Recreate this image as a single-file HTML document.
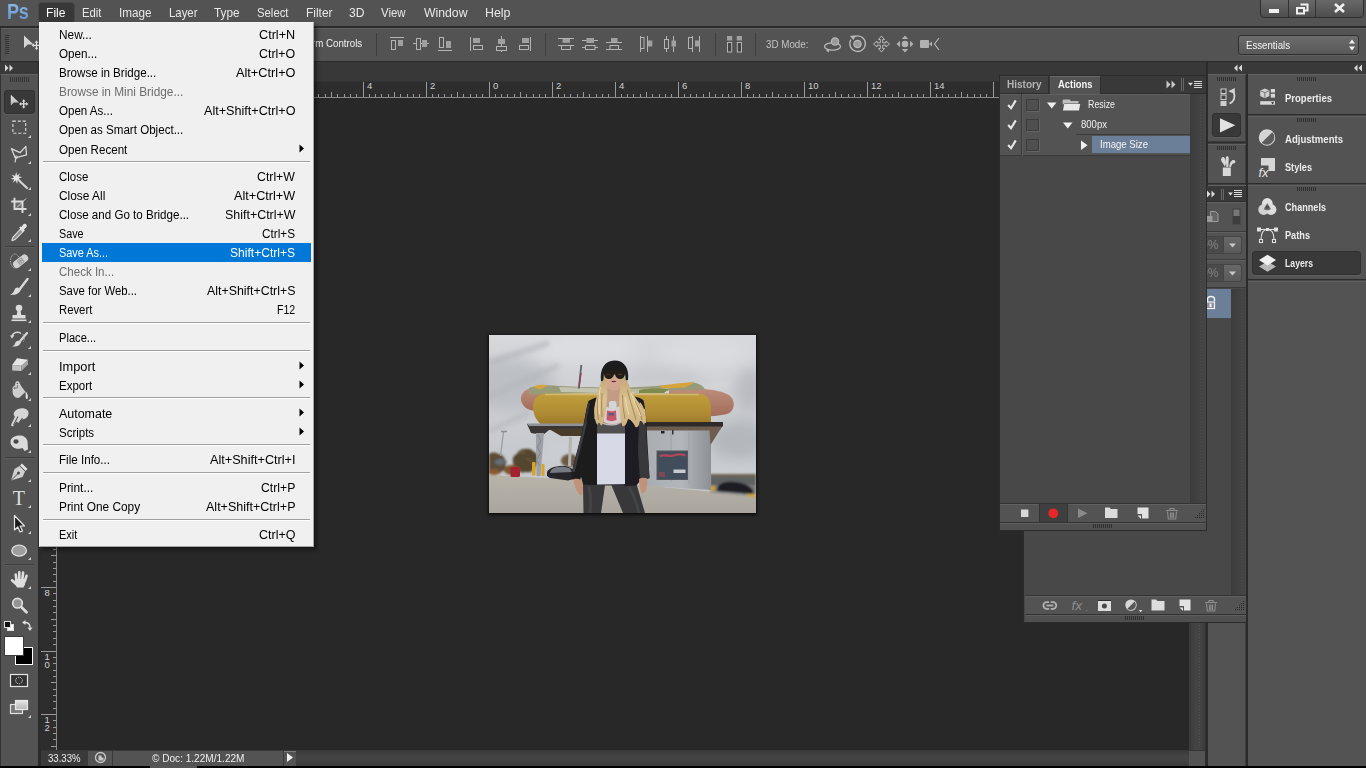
<!DOCTYPE html>
<html><head><meta charset="utf-8"><title>Photoshop</title>
<style>
html,body{margin:0;padding:0;background:#535353;overflow:hidden}
body{width:1366px;height:768px;font-family:"Liberation Sans",sans-serif}
#app{position:relative;width:1366px;height:768px;overflow:hidden;background:#535353}
#app div,#app span,#app svg{position:absolute;box-sizing:border-box}
.t{white-space:pre;line-height:normal;transform-origin:0 50%}
.grip{background:repeating-linear-gradient(90deg,#2f2f2f 0,#2f2f2f 1px,transparent 1px,transparent 2px)}
</style></head><body><div id="app">
<!-- ===== menu bar ===== -->
<div style="left:0;top:0;width:1366px;height:26px;background:#535353"></div>
<span class="t" style="left:7.2px;top:-1px;font-size:22.4px;font-weight:700;letter-spacing:-0.3px;transform:scaleX(.81);background:linear-gradient(#8cb6e2 15%,#5f97d3 85%);-webkit-background-clip:text;background-clip:text;color:transparent">Ps</span>
<div style="left:39px;top:3px;width:35px;height:19px;background:#383838;border-radius:3px;box-shadow:0 0 0 1px #484848"></div>
<span class="t" style="left:45.5px;top:5.2px;font-size:13px;color:#fff;font-weight:400;transform:scaleX(0.9306);">File</span>
<span class="t" style="left:81.5px;top:5.2px;font-size:13px;color:#e8e8e8;font-weight:400;transform:scaleX(0.8703);">Edit</span>
<span class="t" style="left:118.5px;top:5.2px;font-size:13px;color:#e8e8e8;font-weight:400;transform:scaleX(0.8993);">Image</span>
<span class="t" style="left:168.5px;top:5.2px;font-size:13px;color:#e8e8e8;font-weight:400;transform:scaleX(0.8761);">Layer</span>
<span class="t" style="left:213.5px;top:5.2px;font-size:13px;color:#e8e8e8;font-weight:400;transform:scaleX(0.9047);">Type</span>
<span class="t" style="left:256.5px;top:5.2px;font-size:13px;color:#e8e8e8;font-weight:400;transform:scaleX(0.8716);">Select</span>
<span class="t" style="left:305.5px;top:5.2px;font-size:13px;color:#e8e8e8;font-weight:400;transform:scaleX(0.9173);">Filter</span>
<span class="t" style="left:348.5px;top:5.2px;font-size:13px;color:#e8e8e8;font-weight:400;transform:scaleX(0.9323);">3D</span>
<span class="t" style="left:380.5px;top:5.2px;font-size:13px;color:#e8e8e8;font-weight:400;transform:scaleX(0.8765);">View</span>
<span class="t" style="left:423.5px;top:5.2px;font-size:13px;color:#e8e8e8;font-weight:400;transform:scaleX(0.9405);">Window</span>
<span class="t" style="left:484.5px;top:5.2px;font-size:13px;color:#e8e8e8;font-weight:400;transform:scaleX(0.9533);">Help</span>
<!-- window controls -->
<div style="left:1260px;top:-3px;width:104px;height:21px;border:1px solid #2e2e2e;border-radius:0 0 4px 4px;background:linear-gradient(#6b6b6b,#4e4e4e)"></div>
<div style="left:1288px;top:0;width:1px;height:17px;background:#333"></div>
<div style="left:1315px;top:0;width:1px;height:17px;background:#333"></div>
<div style="left:1269px;top:9px;width:10px;height:4px;background:#f0f0f0"></div>
<svg style="left:1295px;top:3px" width="14" height="12" viewBox="0 0 14 12"><path d="M5.5 1.5h7v6h-2.500" fill="none" stroke="#f0f0f0" stroke-width="2"/><rect x="2" y="5" width="7" height="5.500" fill="none" stroke="#f0f0f0" stroke-width="2"/></svg>
<svg style="left:1333px;top:3px" width="13" height="10" viewBox="0 0 13 10"><path d="M2 1l9 8M11 1l-9 8" stroke="#f0f0f0" stroke-width="2.600" fill="none"/></svg>

<!-- ===== options bar ===== -->
<div style="left:0;top:26px;width:1366px;height:2px;background:#2b2b2b"></div>
<div style="left:0;top:28px;width:1366px;height:33px;background:#535353;border-top:1px solid #626262"></div>
<div style="left:0;top:61px;width:1366px;height:1px;background:#2b2b2b"></div>
<div style="left:0;top:28px;width:1px;height:33px;background:#333"></div>
<!-- dark band under options -->
<div style="left:0;top:62px;width:1366px;height:12px;background:#393939"></div>
<!-- doc tab band -->
<div style="left:40px;top:62px;width:1167px;height:19px;background:#383838"></div>
<!-- rulers & canvas -->
<div style="left:41px;top:81px;width:1165px;height:17px;background:#2d2d2d;border-bottom:1px solid #8a8a8a;border-top:1px solid #333"></div>
<div style="left:41px;top:98px;width:16px;height:652px;background:#2d2d2d;border-right:1px solid #8a8a8a"></div>
<div style="left:57px;top:98px;width:1133px;height:652px;background:#282828"></div>
<!-- doc v scrollbar -->
<div style="left:1189px;top:98px;width:16px;height:652px;background:linear-gradient(90deg,#393939,#444 40%,#444 70%,#3c3c3c)"></div>
<div style="left:1199px;top:100px;width:1px;height:648px;background:repeating-linear-gradient(180deg,#565656 0,#565656 1px,transparent 1px,transparent 3px)"></div>
<!-- status bar -->
<div style="left:41px;top:750px;width:1165px;height:16px;background:linear-gradient(#3a3a3a,#444 45%,#444 60%,#3b3b3b)"></div>
<div style="left:41px;top:750px;width:47px;height:16px;background:#3a3a3a"></div>
<div style="left:88px;top:750px;width:208px;height:16px;background:#535353"></div>
<div style="left:112px;top:750px;width:1px;height:16px;background:#3a3a3a"></div>
<div style="left:283px;top:750px;width:1px;height:16px;background:#3a3a3a"></div>
<div style="left:1189px;top:750px;width:16px;height:16px;background:#535353"></div>
<span class="t" style="left:47.5px;top:753.0px;font-size:10px;color:#f0f0f0;font-weight:400;transform:scaleX(0.9581);">33.33%</span>
<span class="t" style="left:151.5px;top:753.0px;font-size:10px;color:#f0f0f0;font-weight:400;transform:scaleX(1.0070);">© Doc: 1.22M/1.22M</span>
<svg style="left:286px;top:752px" width="8" height="11" viewBox="0 0 8 11"><path d="M1 1l6 4.500-6 4.500z" fill="#f0f0f0"/></svg>
<svg style="left:94px;top:751px" width="13" height="13" viewBox="0 0 13 13"><circle cx="6.500" cy="6.500" r="5" fill="none" stroke="#c8c8c8" stroke-width="1.300"/><path d="M4.500 4.500h3v2h2v3h-5z" fill="#c8c8c8"/></svg>
<div style="left:41px;top:750px;width:1165px;height:1px;background:#363636"></div>
<div style="left:284px;top:751px;width:12px;height:1px;background:#7a7a7a"></div>
<!-- bottom black -->
<div style="left:0;top:766px;width:1366px;height:2px;background:#000"></div>
<div style="left:150px;top:766px;width:47px;height:2px;background:#555"></div>
<!-- ===== tools panel ===== -->
<div style="left:0;top:62px;width:40px;height:12px;background:#393939"></div>
<svg style="left:4px;top:64px" width="10" height="8" viewBox="0 0 10 8"><path d="M1 .5l3.500 3.500L1 7.500zM5.500.5L9 4 5.500 7.500z" fill="#d8d8d8"/></svg>
<div style="left:0;top:74px;width:38px;height:692px;background:#535353;border-top:1px solid #626262;border-left:1px solid #333"></div>
<div style="left:38px;top:62px;width:3px;height:704px;background:#2b2b2b"></div>
<div style="left:10px;top:77px;width:20px;height:5px;background:repeating-linear-gradient(90deg,#333 0,#333 1px,transparent 1px,transparent 2px)"></div>
<!-- selected move tool -->
<div style="left:4px;top:90px;width:31px;height:24px;background:#393939;border-radius:3px;border:1px solid #303030;box-shadow:0 1px 0 #5e5e5e"></div>
<!-- separators -->
<div style="left:5px;top:246px;width:29px;height:1px;background:#3c3c3c;box-shadow:0 1px 0 #5c5c5c"></div>
<div style="left:5px;top:457px;width:29px;height:1px;background:#3c3c3c;box-shadow:0 1px 0 #5c5c5c"></div>
<div style="left:5px;top:564px;width:29px;height:1px;background:#3c3c3c;box-shadow:0 1px 0 #5c5c5c"></div>
<svg style="left:0;top:0;pointer-events:none" width="40" height="768" viewBox="0 0 40 768">
<defs>
<linearGradient id="ig" x1="0" y1="0" x2="0" y2="1"><stop offset="0" stop-color="#e6e6e6"/><stop offset="1" stop-color="#b4b4b4"/></linearGradient>
</defs>
<g fill="#cfcfcf">
<!-- corner triangles -->
<path d="M28 138L31 135V138z"/><path d="M28 164L31 161V164z"/><path d="M28 190L31 187V190z"/><path d="M28 216L31 213V216z"/><path d="M28 242L31 239V242z"/>
<path d="M28 271L31 268V271z"/><path d="M28 297L31 294V297z"/><path d="M28 323L31 320V323z"/><path d="M28 349L31 346V349z"/><path d="M28 375L31 372V375z"/><path d="M28 401L31 398V401z"/><path d="M28 427L31 424V427z"/><path d="M28 453L31 450V453z"/>
<path d="M28 482L31 479V482z"/><path d="M28 508L31 505V508z"/><path d="M28 534L31 531V534z"/><path d="M28 560L31 557V560z"/>
<path d="M28 589L31 586V589z"/><path d="M28 718L31 715V718z"/>
</g>
<!-- move -->
<g transform="translate(6,89)">
<path d="M4.800 5.700V16.600l3-3.100h5.200z" fill="url(#ig)"/>
<path d="M17.700 10.300l1.800 2.100h-1.200v1.900h1.900v-1.200l2.100 1.800-2.100 1.800v-1.200h-1.900v1.900h1.200l-1.800 2.100-1.800-2.100h1.200v-1.900h-1.900v1.200l-2.100-1.800 2.100-1.800v1.200h1.900v-1.900h-1.200z" fill="#e4e4e4"/>
</g>
<!-- marquee -->
<g transform="translate(6,115)"><rect x="6.900" y="6.100" width="12.800" height="12.200" fill="none" stroke="#dcdcdc" stroke-width="1.100" stroke-dasharray="3 1.900"/></g>
<!-- poly lasso -->
<g transform="translate(6,141)"><path d="M5.400 7.600l8.600 4.100 5.800-6.300.7 8.400-11.300 3z" fill="none" stroke="#d8d8d8" stroke-width="1.300" stroke-linejoin="round"/><circle cx="10.300" cy="16.200" r="1.300" fill="none" stroke="#d8d8d8" stroke-width="1"/><path d="M9.800 17.500l-.8 3.800" stroke="#d8d8d8" stroke-width="1.200"/></g>
<!-- magic wand -->
<g transform="translate(6,167)"><path d="M13.500 14L21 21" stroke="#d4d4d4" stroke-width="2.200" stroke-linecap="round"/><path d="M10.200 5l.9 3.600 2.900-2.400-1.500 3.300 3.800.5-3.500 1.500 2.200 3-3.400-1.300-.4 3.800-1.500-3.500-3 2.300 1.600-3.400-3.800-.3 3.500-1.600-2.400-2.900 3.500 1.300z" fill="#e4e4e4"/></g>
<!-- crop -->
<g transform="translate(6,193)" fill="none" stroke="#dcdcdc" stroke-width="1.900"><rect x="9.500" y="9" width="7" height="7" fill="#6a6a6a" stroke="none"/><path d="M8.500 4.800v11.200H20.500"/><path d="M5.200 8.500h11.300V20"/><path d="M20 5.500l-9 9" stroke-width="1"/></g>
<!-- eyedropper -->
<g transform="translate(6,219)"><path d="M17.300 5.200c1.800-1.800 4.800 1.200 3 3l-2.300 2.300.9.900-1.600 1.600-4.200-4.200 1.600-1.600.9.900z" fill="#e4e4e4"/><path d="M14.300 10.200l2.600 2.600-7.800 7.800-2.800 1.100-.5-.5 1.100-2.800z" fill="#8e8e8e" stroke="#dedede" stroke-width="1.100"/></g>
<!-- healing brush -->
<g transform="translate(6,248)"><ellipse cx="9" cy="13" rx="4.500" ry="7" fill="none" stroke="#c8c8c8" stroke-width="1" stroke-dasharray="1.200 1.200"/><g transform="rotate(-38 14.500 13)"><rect x="6" y="9.500" width="17" height="7.500" rx="3.500" fill="#d2d2d2"/><rect x="11.500" y="10.500" width="6" height="5.500" fill="#9a9a9a"/><circle cx="13.200" cy="12" r=".6" fill="#e8e8e8"/><circle cx="15.700" cy="12" r=".6" fill="#e8e8e8"/><circle cx="13.200" cy="14.500" r=".6" fill="#e8e8e8"/><circle cx="15.700" cy="14.500" r=".6" fill="#e8e8e8"/></g></g>
<!-- brush -->
<g transform="translate(6,274)"><path d="M21.500 5l-8 10.500" stroke="#d8d8d8" stroke-width="2.400" stroke-linecap="round"/><path d="M12 13.500l2.500 2c-.5 4-5 6-10.500 5 3-1 3.500-2.200 4.200-4 .7-2 2-3.200 3.800-3z" fill="#dcdcdc"/></g>
<!-- stamp -->
<g transform="translate(6,300)" fill="#dcdcdc"><circle cx="13" cy="8" r="3.300"/><path d="M11.500 10.500h3l.8 4.500h4.200v3.500h-13V15h4.200z"/><rect x="5.500" y="19.500" width="15" height="1.600"/></g>
<!-- history brush -->
<g transform="translate(6,326)"><path d="M21 7l-8 9.500" stroke="#d8d8d8" stroke-width="2.200" stroke-linecap="round"/><path d="M13.500 15l1.300 1.300c-.5 3-4 4.800-8.800 4.200 2.300-.8 2.700-2 3.200-3.400.6-1.700 2.600-2.600 4.300-2.100z" fill="#d8d8d8"/><path d="M6 10c1-3.500 6-5 9-2.500" fill="none" stroke="#d8d8d8" stroke-width="1.500"/><path d="M4 9.500l4.500-.5-2.500 3.800z" fill="#d8d8d8"/><path d="M16.500 8c2 1.500 2.500 5 1 7.500" fill="none" stroke="#c8c8c8" stroke-width="1" stroke-dasharray="1.200 1.200"/></g>
<!-- eraser -->
<g transform="translate(6,352)"><path d="M11 6.200l11 1.500-6.500 6-9.300-.6z" fill="#e6e6e6"/><path d="M6.200 13.100l9.300.6v5.400l-9.300-.7z" fill="#c4c4c4"/><path d="M15.500 13.700l6.500-6v4.500l-6.500 6.900z" fill="#a6a6a6"/></g>
<!-- paint bucket -->
<g transform="translate(6,378)"><path d="M7 11l7-4.500 5.500 7.500-6 5.500c-1.500 1-4 .5-5.500-1.500s-2-5-1-7z" fill="#cdcdcd"/><ellipse cx="10.500" cy="9" rx="4.200" ry="2" transform="rotate(-33 10.500 9)" fill="#8a8a8a" stroke="#e0e0e0" stroke-width=".8"/><path d="M10 9.500V5c0-1.500 3-1.500 3 0v4" fill="none" stroke="#e6e6e6" stroke-width="1.200"/><path d="M19.500 13.500c1.500 1 2.500 3.500 2.300 6.500-.1 1.300-1.800 1.300-2 0-.3-2 .2-4-.3-6.500z" fill="#e6e6e6"/></g>
<!-- smudge -->
<g transform="translate(6,404)"><path d="M8 8.500c2-3.500 7-4.800 11-3.800 2.500.6 3.800 2.600 3.500 5.200-.4 3-2.600 4.800-5.400 5.300l-2.300.4-2.300 3.400-2.200-1.400-2.800 4.100c-.9 1.200-2.900.2-2.300-1.300l3.700-7.600c-1.200-1.100-1.600-2.800-.9-4.300z" fill="#d6d6d6"/><path d="M12 12.500l-4.500 8.500M16.500 14l-3.500 5" stroke="#5a5a5a" stroke-width="1.100"/></g>
<!-- dodge -->
<g transform="translate(6,430)"><path d="M4.500 12c0-4 4-6.500 9-6.500 4 0 7 2 8 5.500l.5 8.500-3.500 1.500-2-3c-1 .5-2.500.8-4 .8-4.500 0-8-3-8-6.800z" fill="#dadada"/><ellipse cx="10" cy="11.500" rx="2.600" ry="2.200" fill="#4a4a4a"/></g>
<!-- pen -->
<g transform="translate(6,459)"><path d="M16 4.500l5.500 5.500-2 2-5.500-5.500z" fill="#e4e4e4"/><path d="M13.500 7l5.500 5.500-2.500 5.500L5 21.500 8.500 10z" fill="#d0d0d0"/><path d="M5 21.500l7-7" stroke="#4a4a4a" stroke-width="1"/><circle cx="12.500" cy="14" r="1.500" fill="#4a4a4a"/><path d="M14.600 7.500l4 4" stroke="#5a5a5a" stroke-width=".9"/></g>
<!-- path selection arrow -->
<g transform="translate(6,511)"><path d="M8.500 4.500v14.500l3.300-3 2.300 5 2.400-1.100-2.300-4.900h4.300z" fill="#1c1c1c" stroke="#e8e8e8" stroke-width="1.200" stroke-linejoin="round"/></g>
<!-- ellipse -->
<g transform="translate(6,537)"><ellipse cx="13.100" cy="13.700" rx="7.300" ry="5.500" fill="#9e9e9e" stroke="#e0e0e0" stroke-width="1.300"/></g>
<!-- hand -->
<g transform="translate(6,566)"><g stroke="#dedede" stroke-width="2.600" stroke-linecap="round" fill="none"><path d="M10.600 14.500L9.700 8.500"/><path d="M13.300 13.500V6.300"/><path d="M16.300 13.500l.8-7"/><path d="M18.800 15l1.700-5.200"/><path d="M9.500 17.500L6 14.300"/></g><path d="M9 13h10.800l-.8 5.500-1.500 3H11l-2.500-4z" fill="#dedede"/></g>
<!-- zoom -->
<g transform="translate(6,592)"><circle cx="11.500" cy="11.200" r="4.800" fill="#949494" stroke="#dedede" stroke-width="1.700"/><path d="M15.500 15.300l5 5" stroke="#dedede" stroke-width="2.800" stroke-linecap="round"/></g>
<!-- default colors / swap -->
<rect x="7.500" y="624.500" width="6" height="6" fill="#fff" stroke="#e0e0e0" stroke-width="1"/><rect x="4.500" y="621.500" width="6" height="6" fill="#111" stroke="#e0e0e0" stroke-width="1"/>
<path d="M25 622.500c3 0 5 1.500 5 5" fill="none" stroke="#e0e0e0" stroke-width="1.400"/><path d="M22 622.500l3.500-2.500v5zM30 631l-2.500-3.500h5z" fill="#e0e0e0"/>
<!-- bg / fg -->
<rect x="15.500" y="647.500" width="17" height="17" fill="#000" stroke="#fff" stroke-width="1"/>
<rect x="4.500" y="636.500" width="19" height="19" fill="#fff" stroke="#3a3a3a" stroke-width="1"/>
<!-- quick mask -->
<rect x="10.500" y="674.500" width="17" height="12" fill="#333" stroke="#e6e6e6" stroke-width="1.200"/><circle cx="19" cy="680.500" r="3.300" fill="none" stroke="#f0f0f0" stroke-width="1" stroke-dasharray="1 1"/>
<!-- screen mode -->
<rect x="10.500" y="704.500" width="12" height="9" fill="#777" stroke="#e0e0e0" stroke-width="1.200"/><rect x="15.500" y="700.500" width="12" height="9" fill="url(#ig)" stroke="#e8e8e8" stroke-width="1.200"/>
</svg>
<span class="t" style="left:12.8px;top:484.5px;font-family:'Liberation Serif',serif;font-size:20px;color:#dcdcdc;line-height:26px">T</span>
<!-- ===== options bar content ===== -->
<div style="left:5px;top:35px;width:4px;height:20px;background:repeating-linear-gradient(180deg,#333 0,#333 1px,transparent 1px,transparent 2px)"></div>
<svg style="left:20px;top:32px" width="22" height="22" viewBox="0 0 22 22"><path d="M4 3.500V16l3.800-3.400H13.500z" fill="#d6d6d6"/><path d="M16.500 8.500l2 2.300h-1.400v1.900H19v-1.400l2.300 2-2.300 2v-1.400h-1.900v1.900h1.400l-2 2.300-2-2.300h1.400v-1.900H14v1.400l-2.300-2 2.300-2v1.400h1.900v-1.900h-1.400z" fill="#e0e0e0"/></svg>
<span class="t" style="left:311.8px;top:37.3px;font-size:10.5px;color:#f0f0f0;font-weight:400;transform:scaleX(0.9251);">rm Controls</span>
<div style="left:376px;top:33px;width:1px;height:23px;background:#3e3e3e"></div>
<div style="left:545px;top:33px;width:1px;height:23px;background:#3e3e3e"></div>
<div style="left:715px;top:33px;width:1px;height:23px;background:#3e3e3e"></div>
<div style="left:755px;top:33px;width:1px;height:23px;background:#3e3e3e"></div>
<svg style="left:0;top:28px" width="1000" height="33" viewBox="0 28 1000 33" fill="none" stroke="#b4b4b4" stroke-width="1"><path d="M390 37.5L404 37.5"/><rect x="391.5" y="40.5" width="4" height="9"/><rect x="398" y="40" width="5" height="6" fill="#a0a0a0" stroke="none"/><path d="M413 43.5L429 43.5"/><rect x="416.5" y="38.5" width="4" height="11" fill="#535353"/><rect x="422" y="40" width="5" height="7" fill="#a0a0a0" stroke="none"/><path d="M438 50.5L452 50.5"/><rect x="439.5" y="37.5" width="4" height="10"/><rect x="446" y="41" width="5" height="7" fill="#a0a0a0" stroke="none"/><path d="M470.5 37L470.5 51"/><rect x="473" y="38" width="7" height="5" fill="#a0a0a0" stroke="none"/><rect x="473.5" y="45.5" width="9" height="4"/><path d="M501.5 36L501.5 52"/><rect x="498" y="39" width="7" height="5" fill="#a0a0a0" stroke="none"/><rect x="496.5" y="46.5" width="10" height="4" fill="#535353"/><path d="M530.5 37L530.5 51"/><rect x="522" y="38" width="7" height="5" fill="#a0a0a0" stroke="none"/><rect x="519.5" y="45.5" width="9" height="4"/><path d="M558 38.5L574 38.5"/><rect x="562.5" y="39" width="7.5" height="3.8" fill="#a0a0a0" stroke="none"/><path d="M558 45.5L574 45.5"/><rect x="561.5" y="45.5" width="9" height="4"/><path d="M582 40.5L598 40.5"/><rect x="586.5" y="38" width="7.5" height="5" fill="#a0a0a0" stroke="none"/><path d="M582 47.5L598 47.5"/><rect x="585.5" y="45.5" width="9.5" height="4" fill="#535353"/><path d="M606 42.5L622 42.5"/><rect x="611" y="38" width="6.5" height="4.2" fill="#a0a0a0" stroke="none"/><path d="M606 49.5L622 49.5"/><rect x="610" y="45.5" width="8.5" height="4"/><path d="M640.5 36L640.5 52"/><rect x="640.5" y="37.5" width="3.5" height="11"/><path d="M647.5 36L647.5 52"/><rect x="648" y="40.5" width="4.3" height="6" fill="#a0a0a0" stroke="none"/><path d="M666.5 36L666.5 52"/><rect x="664.5" y="39.5" width="4" height="9" fill="#535353"/><path d="M673.5 36L673.5 52"/><rect x="671.5" y="40.5" width="4.5" height="6" fill="#a0a0a0" stroke="none"/><path d="M692.5 36L692.5 52"/><rect x="688.5" y="37.5" width="4" height="11"/><path d="M699.5 36L699.5 52"/><rect x="695" y="40.5" width="4.5" height="6" fill="#a0a0a0" stroke="none"/><rect x="727" y="36" width="5.2" height="4.5" fill="#a0a0a0" stroke="none"/><rect x="736.8" y="36" width="5.2" height="4.5" fill="#a0a0a0" stroke="none"/><rect x="727.5" y="42.5" width="4.2" height="9.5" fill="#444"/><rect x="737.3" y="42.5" width="4.2" height="9.5" fill="#444"/></svg>
<span class="t" style="left:765.5px;top:37.5px;font-size:10.5px;color:#c2c2c2;font-weight:400;transform:scaleX(0.9334);">3D Mode:</span>
<svg style="left:820px;top:32px" width="124" height="24" viewBox="820 32 124 24">
<g fill="none" stroke="#b9b9b9" stroke-width="1.300">
<ellipse cx="832.500" cy="46.500" rx="8" ry="3.600"/><circle cx="835" cy="41.500" r="3.600" fill="#999"/><path d="M826 50.500l3.500-1-1 3z" fill="#b9b9b9" stroke="none"/>
<path d="M851 39.500a7.800 7.800 0 1 0 4-3.200"/><path d="M850 36l5.800-.8-2.200 4.800z" fill="#b9b9b9" stroke="none"/><circle cx="857.500" cy="44" r="3.600" fill="#999"/>
<path d="M881.500 36l3 3.500h-1.800v3.300h3.300V41l3.500 3-3.500 3v-1.800h-3.300v3.300h1.800l-3 3.500-3-3.500h1.800v-3.300H877V47l-3.500-3 3.500-3v1.800h3.300v-3.300h-1.800z" stroke-width="1"/>
</g>
<g fill="#b2b2b2"><circle cx="905" cy="44" r="3.300"/><path d="M905 35.500l3.200 3.500h-6.400zM905 52.500l3.200-3.500h-6.400zM896.500 44l3.500-3.200v6.400zM913.500 44l-3.500-3.200v6.400z"/>
<rect x="920" y="40" width="9" height="8" rx="1"/><path d="M929 44l3-2.500v5z"/></g>
<path d="M939 38l-4.500 6 4.500 6" fill="none" stroke="#b2b2b2" stroke-width="1.200"/>
</svg>
<div style="left:1238px;top:35px;width:121px;height:20px;border:1px solid #2f2f2f;border-radius:3px;background:linear-gradient(#6c6c6c,#585858);box-shadow:0 1px 0 #606060"></div>
<span class="t" style="left:1246.0px;top:38.5px;font-size:11px;color:#f4f4f4;font-weight:400;transform:scaleX(0.8775);">Essentials</span>
<svg style="left:1348px;top:39px" width="8" height="12" viewBox="0 0 8 12"><path d="M4 .5L7 4.500H1zM4 11.500L7 7.500H1z" fill="#f0f0f0"/></svg>
<!-- ===== rulers ticks ===== -->
<svg style="left:41px;top:81px" width="1165" height="17" viewBox="41 81 1165 17"><g stroke="#9a9a9a" stroke-width="1"><path d="M60.5 94V97"/><path d="M66.5 94V97"/><path d="M73.5 94V97"/><path d="M79.5 92V97"/><path d="M85.5 94V97"/><path d="M92.5 94V97"/><path d="M98.5 94V97"/><path d="M104.5 94V97"/><path d="M111.5 82V97"/><path d="M117.5 94V97"/><path d="M123.5 94V97"/><path d="M129.5 94V97"/><path d="M136.5 94V97"/><path d="M142.5 92V97"/><path d="M148.5 94V97"/><path d="M155.5 94V97"/><path d="M161.5 94V97"/><path d="M167.5 94V97"/><path d="M174.5 82V97"/><path d="M180.5 94V97"/><path d="M186.5 94V97"/><path d="M192.5 94V97"/><path d="M199.5 94V97"/><path d="M205.5 92V97"/><path d="M211.5 94V97"/><path d="M218.5 94V97"/><path d="M224.5 94V97"/><path d="M230.5 94V97"/><path d="M237.5 82V97"/><path d="M243.5 94V97"/><path d="M249.5 94V97"/><path d="M255.5 94V97"/><path d="M262.5 94V97"/><path d="M268.5 92V97"/><path d="M274.5 94V97"/><path d="M281.5 94V97"/><path d="M287.5 94V97"/><path d="M293.5 94V97"/><path d="M300.5 82V97"/><path d="M306.5 94V97"/><path d="M312.5 94V97"/><path d="M318.5 94V97"/><path d="M325.5 94V97"/><path d="M331.5 92V97"/><path d="M337.5 94V97"/><path d="M344.5 94V97"/><path d="M350.5 94V97"/><path d="M356.5 94V97"/><path d="M363.5 82V97"/><path d="M369.5 94V97"/><path d="M375.5 94V97"/><path d="M381.5 94V97"/><path d="M388.5 94V97"/><path d="M394.5 92V97"/><path d="M400.5 94V97"/><path d="M407.5 94V97"/><path d="M413.5 94V97"/><path d="M419.5 94V97"/><path d="M426.5 82V97"/><path d="M432.5 94V97"/><path d="M438.5 94V97"/><path d="M444.5 94V97"/><path d="M451.5 94V97"/><path d="M457.5 92V97"/><path d="M463.5 94V97"/><path d="M470.5 94V97"/><path d="M476.5 94V97"/><path d="M482.5 94V97"/><path d="M489.5 82V97"/><path d="M495.5 94V97"/><path d="M501.5 94V97"/><path d="M507.5 94V97"/><path d="M514.5 94V97"/><path d="M520.5 92V97"/><path d="M526.5 94V97"/><path d="M533.5 94V97"/><path d="M539.5 94V97"/><path d="M545.5 94V97"/><path d="M552.5 82V97"/><path d="M558.5 94V97"/><path d="M564.5 94V97"/><path d="M570.5 94V97"/><path d="M577.5 94V97"/><path d="M583.5 92V97"/><path d="M589.5 94V97"/><path d="M596.5 94V97"/><path d="M602.5 94V97"/><path d="M608.5 94V97"/><path d="M615.5 82V97"/><path d="M621.5 94V97"/><path d="M627.5 94V97"/><path d="M633.5 94V97"/><path d="M640.5 94V97"/><path d="M646.5 92V97"/><path d="M652.5 94V97"/><path d="M659.5 94V97"/><path d="M665.5 94V97"/><path d="M671.5 94V97"/><path d="M678.5 82V97"/><path d="M684.5 94V97"/><path d="M690.5 94V97"/><path d="M696.5 94V97"/><path d="M703.5 94V97"/><path d="M709.5 92V97"/><path d="M715.5 94V97"/><path d="M722.5 94V97"/><path d="M728.5 94V97"/><path d="M734.5 94V97"/><path d="M741.5 82V97"/><path d="M747.5 94V97"/><path d="M753.5 94V97"/><path d="M759.5 94V97"/><path d="M766.5 94V97"/><path d="M772.5 92V97"/><path d="M778.5 94V97"/><path d="M785.5 94V97"/><path d="M791.5 94V97"/><path d="M797.5 94V97"/><path d="M804.5 82V97"/><path d="M810.5 94V97"/><path d="M816.5 94V97"/><path d="M822.5 94V97"/><path d="M829.5 94V97"/><path d="M835.5 92V97"/><path d="M841.5 94V97"/><path d="M848.5 94V97"/><path d="M854.5 94V97"/><path d="M860.5 94V97"/><path d="M867.5 82V97"/><path d="M873.5 94V97"/><path d="M879.5 94V97"/><path d="M885.5 94V97"/><path d="M892.5 94V97"/><path d="M898.5 92V97"/><path d="M904.5 94V97"/><path d="M911.5 94V97"/><path d="M917.5 94V97"/><path d="M923.5 94V97"/><path d="M930.5 82V97"/><path d="M936.5 94V97"/><path d="M942.5 94V97"/><path d="M948.5 94V97"/><path d="M955.5 94V97"/><path d="M961.5 92V97"/><path d="M967.5 94V97"/><path d="M974.5 94V97"/><path d="M980.5 94V97"/><path d="M986.5 94V97"/><path d="M993.5 82V97"/><path d="M999.5 94V97"/><path d="M1005.5 94V97"/><path d="M1011.5 94V97"/><path d="M1018.5 94V97"/><path d="M1024.5 92V97"/><path d="M1030.5 94V97"/><path d="M1037.5 94V97"/><path d="M1043.5 94V97"/><path d="M1049.5 94V97"/><path d="M1056.5 82V97"/><path d="M1062.5 94V97"/><path d="M1068.5 94V97"/><path d="M1074.5 94V97"/><path d="M1081.5 94V97"/><path d="M1087.5 92V97"/><path d="M1093.5 94V97"/><path d="M1100.5 94V97"/><path d="M1106.5 94V97"/><path d="M1112.5 94V97"/><path d="M1119.5 82V97"/><path d="M1125.5 94V97"/><path d="M1131.5 94V97"/><path d="M1137.5 94V97"/><path d="M1144.5 94V97"/><path d="M1150.5 92V97"/><path d="M1156.5 94V97"/><path d="M1163.5 94V97"/><path d="M1169.5 94V97"/><path d="M1175.5 94V97"/><path d="M1182.5 82V97"/><path d="M1188.5 94V97"/><path d="M1194.5 94V97"/><path d="M1200.5 94V97"/></g></svg>
<span class="t" style="left:304.0px;top:80.2px;font-size:9.5px;color:#cfcfcf;line-height:11px">6</span>
<span class="t" style="left:367.0px;top:80.2px;font-size:9.5px;color:#cfcfcf;line-height:11px">4</span>
<span class="t" style="left:430.0px;top:80.2px;font-size:9.5px;color:#cfcfcf;line-height:11px">2</span>
<span class="t" style="left:493.0px;top:80.2px;font-size:9.5px;color:#cfcfcf;line-height:11px">0</span>
<span class="t" style="left:556.0px;top:80.2px;font-size:9.5px;color:#cfcfcf;line-height:11px">2</span>
<span class="t" style="left:619.0px;top:80.2px;font-size:9.5px;color:#cfcfcf;line-height:11px">4</span>
<span class="t" style="left:682.0px;top:80.2px;font-size:9.5px;color:#cfcfcf;line-height:11px">6</span>
<span class="t" style="left:745.0px;top:80.2px;font-size:9.5px;color:#cfcfcf;line-height:11px">8</span>
<span class="t" style="left:808.0px;top:80.2px;font-size:9.5px;color:#cfcfcf;line-height:11px">10</span>
<span class="t" style="left:871.0px;top:80.2px;font-size:9.5px;color:#cfcfcf;line-height:11px">12</span>
<span class="t" style="left:934.0px;top:80.2px;font-size:9.5px;color:#cfcfcf;line-height:11px">14</span>
<svg style="left:41px;top:98px" width="16" height="652" viewBox="41 98 16 652"><g stroke="#9a9a9a" stroke-width="1"><path d="M53 98.5H56"/><path d="M53 104.5H56"/><path d="M51 111.5H56"/><path d="M53 117.5H56"/><path d="M53 123.5H56"/><path d="M53 130.5H56"/><path d="M53 136.5H56"/><path d="M41 143.5H56"/><path d="M53 149.5H56"/><path d="M53 155.5H56"/><path d="M53 162.5H56"/><path d="M53 168.5H56"/><path d="M51 174.5H56"/><path d="M53 181.5H56"/><path d="M53 187.5H56"/><path d="M53 193.5H56"/><path d="M53 200.5H56"/><path d="M41 206.5H56"/><path d="M53 212.5H56"/><path d="M53 219.5H56"/><path d="M53 225.5H56"/><path d="M53 231.5H56"/><path d="M51 238.5H56"/><path d="M53 244.5H56"/><path d="M53 250.5H56"/><path d="M53 257.5H56"/><path d="M53 263.5H56"/><path d="M41 270.5H56"/><path d="M53 276.5H56"/><path d="M53 282.5H56"/><path d="M53 289.5H56"/><path d="M53 295.5H56"/><path d="M51 301.5H56"/><path d="M53 308.5H56"/><path d="M53 314.5H56"/><path d="M53 320.5H56"/><path d="M53 327.5H56"/><path d="M41 333.5H56"/><path d="M53 339.5H56"/><path d="M53 346.5H56"/><path d="M53 352.5H56"/><path d="M53 358.5H56"/><path d="M51 365.5H56"/><path d="M53 371.5H56"/><path d="M53 377.5H56"/><path d="M53 384.5H56"/><path d="M53 390.5H56"/><path d="M41 397.5H56"/><path d="M53 403.5H56"/><path d="M53 409.5H56"/><path d="M53 416.5H56"/><path d="M53 422.5H56"/><path d="M51 428.5H56"/><path d="M53 435.5H56"/><path d="M53 441.5H56"/><path d="M53 447.5H56"/><path d="M53 454.5H56"/><path d="M41 460.5H56"/><path d="M53 466.5H56"/><path d="M53 473.5H56"/><path d="M53 479.5H56"/><path d="M53 485.5H56"/><path d="M51 492.5H56"/><path d="M53 498.5H56"/><path d="M53 504.5H56"/><path d="M53 511.5H56"/><path d="M53 517.5H56"/><path d="M41 524.5H56"/><path d="M53 530.5H56"/><path d="M53 536.5H56"/><path d="M53 543.5H56"/><path d="M53 549.5H56"/><path d="M51 555.5H56"/><path d="M53 562.5H56"/><path d="M53 568.5H56"/><path d="M53 574.5H56"/><path d="M53 581.5H56"/><path d="M41 587.5H56"/><path d="M53 593.5H56"/><path d="M53 600.5H56"/><path d="M53 606.5H56"/><path d="M53 612.5H56"/><path d="M51 619.5H56"/><path d="M53 625.5H56"/><path d="M53 631.5H56"/><path d="M53 638.5H56"/><path d="M53 644.5H56"/><path d="M41 651.5H56"/><path d="M53 657.5H56"/><path d="M53 663.5H56"/><path d="M53 670.5H56"/><path d="M53 676.5H56"/><path d="M51 682.5H56"/><path d="M53 689.5H56"/><path d="M53 695.5H56"/><path d="M53 701.5H56"/><path d="M53 708.5H56"/><path d="M41 714.5H56"/><path d="M53 720.5H56"/><path d="M53 727.5H56"/><path d="M53 733.5H56"/><path d="M53 739.5H56"/><path d="M51 746.5H56"/></g></svg>
<span class="t" style="left:44.5px;top:143.6px;font-size:9.5px;color:#cfcfcf;line-height:9px">6</span>
<span class="t" style="left:44.5px;top:207.1px;font-size:9.5px;color:#cfcfcf;line-height:9px">4</span>
<span class="t" style="left:44.5px;top:270.6px;font-size:9.5px;color:#cfcfcf;line-height:9px">2</span>
<span class="t" style="left:44.5px;top:334.1px;font-size:9.5px;color:#cfcfcf;line-height:9px">0</span>
<span class="t" style="left:44.5px;top:397.6px;font-size:9.5px;color:#cfcfcf;line-height:9px">2</span>
<span class="t" style="left:44.5px;top:461.1px;font-size:9.5px;color:#cfcfcf;line-height:9px">4</span>
<span class="t" style="left:44.5px;top:524.6px;font-size:9.5px;color:#cfcfcf;line-height:9px">6</span>
<span class="t" style="left:44.5px;top:588.1px;font-size:9.5px;color:#cfcfcf;line-height:9px">8</span>
<span class="t" style="left:44.5px;top:651.6px;font-size:9.5px;color:#cfcfcf;line-height:9px">1</span>
<span class="t" style="left:44.5px;top:659.9px;font-size:9.5px;color:#cfcfcf;line-height:9px">0</span>
<span class="t" style="left:44.5px;top:715.1px;font-size:9.5px;color:#cfcfcf;line-height:9px">1</span>
<span class="t" style="left:44.5px;top:723.4px;font-size:9.5px;color:#cfcfcf;line-height:9px">2</span>
<div style="left:41px;top:81px;width:16px;height:17px;background:#2d2d2d;border-right:1px dotted #777;border-bottom:1px dotted #777"></div>
<!-- ===== photo ===== -->
<div style="left:489px;top:335px;width:267px;height:178px;box-shadow:0 1px 3px 1px rgba(0,0,0,.7)"></div>
<svg style="left:489px;top:335px" width="267" height="178" viewBox="0 0 267 178">
<defs>
<filter id="b1" x="-20%" y="-20%" width="140%" height="140%"><feGaussianBlur stdDeviation="1"/></filter>
<filter id="b2" x="-20%" y="-20%" width="140%" height="140%"><feGaussianBlur stdDeviation="2"/></filter>
<filter id="b6" x="-30%" y="-30%" width="160%" height="160%"><feGaussianBlur stdDeviation="7"/></filter>
<filter id="bh" x="-20%" y="-20%" width="140%" height="140%"><feGaussianBlur stdDeviation=".6"/></filter>
<linearGradient id="sky" x1="0" y1="0" x2="0" y2="1"><stop offset="0" stop-color="#d7d8db"/><stop offset=".45" stop-color="#cbcdd1"/><stop offset="1" stop-color="#c3c6cb"/></linearGradient>
<linearGradient id="gnd" x1="0" y1="0" x2="0" y2="1"><stop offset="0" stop-color="#b9b4aa"/><stop offset="1" stop-color="#a9a59d"/></linearGradient>
<linearGradient id="bun" x1="0" y1="0" x2="0" y2="1"><stop offset="0" stop-color="#c09e3c"/><stop offset=".6" stop-color="#b08d33"/><stop offset="1" stop-color="#9a7829"/></linearGradient>
<linearGradient id="saus" x1="0" y1="0" x2="0" y2="1"><stop offset="0" stop-color="#bd8e7a"/><stop offset="1" stop-color="#a26c5a"/></linearGradient>
<linearGradient id="wall" x1="0" y1="0" x2="1" y2="0"><stop offset="0" stop-color="#a9adb2"/><stop offset=".55" stop-color="#b3b7bb"/><stop offset="1" stop-color="#8d9196"/></linearGradient>
<linearGradient id="hair" x1="0" y1="0" x2="0" y2="1"><stop offset="0" stop-color="#c2a572"/><stop offset=".5" stop-color="#d9c394"/><stop offset="1" stop-color="#cdb383"/></linearGradient>
<clipPath id="pc"><rect width="267" height="178"/></clipPath>
</defs>
<g clip-path="url(#pc)">
<rect width="267" height="178" fill="url(#sky)"/>
<!-- clouds -->
<g filter="url(#b6)">
<ellipse cx="20" cy="50" rx="45" ry="26" fill="#bcbfc4"/>
<ellipse cx="95" cy="14" rx="55" ry="13" fill="#dddee1"/>
<ellipse cx="215" cy="18" rx="45" ry="16" fill="#dadbde"/>
<ellipse cx="262" cy="55" rx="16" ry="22" fill="#b9bcc1"/>
<ellipse cx="250" cy="105" rx="30" ry="20" fill="#b4b8bd"/>
<ellipse cx="175" cy="42" rx="40" ry="9" fill="#c6c8cc"/>
<ellipse cx="25" cy="118" rx="40" ry="12" fill="#c6c9cd"/>
<ellipse cx="72" cy="118" rx="22" ry="12" fill="#cbced2"/>
<ellipse cx="245" cy="136" rx="30" ry="8" fill="#cccfd2"/>
</g>
<g filter="url(#b2)" opacity=".55">
<path d="M0 28L60 8" stroke="#aeb1b7" stroke-width="7"/>
<path d="M0 62L70 30" stroke="#b2b5ba" stroke-width="6"/>
<path d="M0 96L40 78" stroke="#b3b6bb" stroke-width="6"/>
<path d="M170 62L240 48" stroke="#d6d7da" stroke-width="5"/>
</g>
<!-- ground -->
<path d="M0 140L110 146L267 161V178H0z" fill="url(#gnd)"/>
<!-- distant right building -->
<g filter="url(#b1)">
<path d="M221 139h46v12h-46z" fill="#5f6264"/><path d="M221 139h46v3h-46z" fill="#6d6553"/>
<path d="M221 150h46v11l-46-4z" fill="#77797a"/>
<path d="M229 151c3-4 10-5 18-4 8 1 14 4 17 8v4l-36-3z" fill="#1f1f21"/>
<rect x="221" y="151" width="5" height="5" fill="#c9a028"/><rect x="258" y="159" width="9" height="2.500" fill="#c9a638"/>
</g>
<!-- trees left -->
<g filter="url(#b1)">
<path d="M0 119c3-2 7-2 9 0 3 0 6 2 6.500 5 2 1 2.500 4 1 6 1 3-1 6-4 6.500-1 2-4 3-6 2-2 1-5 0-6.500-1z" fill="#5c4e39"/>
<ellipse cx="11" cy="127" rx="5" ry="3" fill="#68707c"/>
<path d="M24 127c-1-4 1-7 4-8 1-3 4-5 8-5 3-1 7 0 9 3 3 1 4 4 3 7 1 3 0 6-2 8-1 4-5 6-9 5-4 1-8 0-10-3-2-2-3-4-3-7z" fill="#52452f"/>
<path d="M30 118c2-1 5-1 7 0M38 124c2 0 4 1 5 3" stroke="#6b5a3c" stroke-width="2" fill="none"/>
<ellipse cx="23" cy="135" rx="8" ry="5" fill="#7b5531"/><ellipse cx="5" cy="137" rx="6" ry="3" fill="#8a5a30"/>
<path d="M72 125c1-4 5-6 9-6 4 0 7 2 7.500 6 .5 3-1 6-4 6.500-4 1-9 0-11-2-1-1.500-1.500-3-1.500-4.500z" fill="#6c5a46"/>
</g>
<!-- lamp -->
<g filter="url(#bh)"><path d="M14.500 97l-3 24" stroke="#9a9ea4" stroke-width="1.300"/><path d="M12 96.500h6" stroke="#8a8e94" stroke-width="1.600"/></g>
<!-- sausage ends -->
<g filter="url(#bh)">
<ellipse cx="46" cy="64" rx="14" ry="11.500" fill="url(#saus)"/>
<path d="M180 54c25-2 55 0 62 8 5 6 3 15-4 17-8 2.500-30 3-58 2z" fill="url(#saus)"/>
<!-- toppings -->
<path d="M40 53c8-3 20-3.500 30-2 20 1 50 2 70 1.500 25-.8 50-3.500 62-5 8 0 13 4 14 7l-176 5z" fill="#989b78"/>
<path d="M44 52c4-2.500 10-3 15-1.500l-8 4zM170 51c12-2 28-4 36-3.500l-10 5-22 1z" fill="#d7a33a"/>
<path d="M70 52l60 2-8 4-50-1z" fill="#c2c3b0"/><path d="M140 54l40-1-4 4-30 1z" fill="#b9bba4"/>
<path d="M150 55c10-2 20-2 30-1l-5 4h-25z" fill="#7d8a4c"/>
<!-- bun -->
<path d="M58 58.500H208c10 0 14 6 14 15v16H52C46 84 44 78 44 72c0-8 5-13.500 14-13.500z" fill="url(#bun)"/>
<path d="M56 59.500H210" stroke="#d9c48a" stroke-width="1.500" opacity=".7"/>
<!-- flag -->
<path d="M92.300 30l-2.500 23.500" stroke="#5d6276" stroke-width="1.800"/><path d="M92 38l-2 14" stroke="#8a4a55" stroke-width="1.500"/>
</g>
<!-- roof / platform -->
<g filter="url(#bh)">
<path d="M38 89h196l-3 6H60l-6 5-12-2z" fill="#3a3634"/>
<path d="M38 88.500h196v2.500H40z" fill="#8f9296"/>
<path d="M60 94h40v7H72z" fill="#4a3a2c"/>
<!-- posts -->
<path d="M47 98h8l-3.500 43h-4z" fill="#9ca0a6"/><path d="M49 100l3 6-4 6 3.500 6-4 7 3.500 6" stroke="#7c8086" stroke-width=".8" fill="none"/>
<path d="M80 102h3l-1 29h-3z" fill="#b3b4b0"/>
<!-- bollards, red thing, car -->
<rect x="43" y="127" width="3.500" height="13.500" rx="1" fill="#d8a423"/><rect x="52.500" y="129" width="3" height="12" rx="1" fill="#d8a423"/>
<rect x="21.500" y="132" width="9.500" height="10" rx="1.500" fill="#a3222f"/>
<path d="M58 137c2-4 8-6 15-6 6 0 10 2 12 5v8l-6 1.500-18-2.500-3-2z" fill="#26272b"/><path d="M62 135c3-3.500 13-4.500 19-1.500l2 3.500-22 1z" fill="#767a82"/>
</g>
<!-- building -->
<g filter="url(#bh)">
<path d="M156 94h66v61l-66-4z" fill="url(#wall)"/>
<path d="M155.500 87h78.500v3l-12.500 20-1-14.500h-65z" fill="#6e5d50"/>
<path d="M155.500 87h78.500v4.500h-78.500z" fill="#2e2c2b"/>
<path d="M182 97v50M200 97v52" stroke="#9a9ea3" stroke-width=".8"/>
<rect x="168" y="116" width="30.500" height="28.500" fill="#424d5c"/><rect x="168" y="116" width="30.500" height="28.500" fill="none" stroke="#54585e" stroke-width="1"/>
<path d="M170.500 121c6-2 10 1 14-.5s8-1.500 12 0" stroke="#b2475a" stroke-width="2.200" fill="none"/>
<rect x="184.500" y="134.500" width="12" height="3.500" fill="#c8ccd0"/><rect x="170" y="137" width="6" height="5" fill="#7a4a52"/>
<rect x="172" y="96" width="3.500" height="2.500" fill="#222"/><rect x="183" y="95" width="1.500" height="4.500" fill="#333"/>
</g>
<!-- ===== person ===== -->
<g filter="url(#bh)">
<!-- legs -->
<path d="M94 149h53.500l8.500 29h-22l-11.500-27.500h-6.500l-4 27.500h-17.500z" fill="#37383a"/>
<path d="M100 152c2 8 2 18 1 26M140 152c5 8 8 18 10 26" stroke="#434446" stroke-width="3" fill="none"/>
<!-- jacket left (viewer) -->
<path d="M118 61c-7 0-14 2-18.500 5-2 6-3 13-4.500 21-3 16-9 36-12.500 51l.5 6 8 2 1-4 2 7.500 14.500.5v-55c2-10 5-22 9.500-33z" fill="#1c1c1f"/>
<path d="M97 86c-3 15-9 35-12.500 51" stroke="#3a3b40" stroke-width="2.500" fill="none"/>
<path d="M100 68c-1.500 6-2.500 12-3.500 18" stroke="#34353a" stroke-width="2" fill="none"/>
<!-- jacket right (viewer) -->
<path d="M131 61h10c6 .5 11 2 13.500 4.500 2 8 3 20 3.500 34l2.500 43.500-9.500 3-3.500 4.500-12 .5v-57c-1-10-2-22-4.500-34z" fill="#1f1f22"/>
<path d="M150 87c3 0 5 1 6.500 3l4 53-9.500 3-2-30z" fill="#38393c"/>
<path d="M149.500 66c3 6 5 14 6 22" stroke="#303135" stroke-width="2" fill="none"/>
<!-- shirt -->
<path d="M108 98h28v51l-28 .500z" fill="#d7d9e7"/>
<path d="M110 86c4 4 16 5 23 0l3 3v9.500h-28V90z" fill="#50504f"/>
<path d="M111 86.500c5 4 15 4.500 21 .5" stroke="#b9b9bb" stroke-width="1.600" fill="none"/>
<!-- neck / upper shirt graphic -->
<path d="M118 52h14l1.500 35c-6 3-13 3-18 0z" fill="#c39c86"/>
<path d="M115.500 71c4 2 11 2 15.500 0l1 16c-5 2.500-12 2.500-17.500 0z" fill="#d6d0d2"/>
<path d="M118 75.500c3 1 6.500 1 9 0l.5 9.500c-3 1.500-7 1.500-10 0z" fill="#c6596b"/><rect x="119.500" y="78" width="5.500" height="2.500" fill="#56607c"/>
<rect x="120" y="66" width="7.500" height="7.500" rx="2" fill="#d2d5da"/>
<!-- face -->
<path d="M116 38h18v9c0 5-4 8.500-9 8.500s-9-3.500-9-8.500z" fill="#d0a68f"/>
<path d="M122 46.300c2-.8 3.500-.8 5.500 0-2 1.200-3.500 1.200-5.500 0z" fill="#7a1f2a"/>
<!-- hair -->
<path d="M115 41c-3 5-5.500 12-7 20-1.500 6-3.500 12-2.500 19 .5 4 1 8 3 10 1-3 2-3 3 0 1.500 1 2.500-1 3-4 2-6 3-14 3.500-22 .5-8 0-16-.5-24z" fill="url(#hair)"/>
<path d="M133.500 40c3 3 6 8 8.500 15 3 8 10 13 13 22 1.500 5 1.500 10 0 13-2-4-3.500-5-4.500-3-.5 4-2 6-4 5-2-4-5-8-7.500-8-1.500 5-3 8-5.500 7-3-8-3.500-20-3-30 .5-7 1-14 3-21z" fill="url(#hair)"/>
<path d="M109.500 60c-1.500 8-1.500 17 0 25M138.500 55c2 10 6 20 8.500 30M133.500 60c0 8 1 17 2.500 24M146 66c3 6 6 13 7 19M113 58c-.5 8-.5 16 0 24" stroke="#b08a52" stroke-width="1.100" fill="none"/>
<path d="M111.500 52c-2 8-2 18-1 27M142 58c3 8 6.500 16 9.500 23M136 62c1 6 2 12 4 18" stroke="#efdcae" stroke-width="1" fill="none"/>
<path d="M107 70c-1.500 5 .5 9-1 14M155 74c2 5 .5 9 1.500 14M151 68c3 4 4 8 5 12" stroke="#d2ba88" stroke-width="1.600" fill="none"/>
<!-- beanie -->
<path d="M112 46c-1.500-12 4-20.500 13.500-20.500S140.500 33 139 45c-1 .8-2 .5-2.500-1l-.5-6.500h-21l-.5 7c-.5 1.500-1.500 2-2.500 1.500z" fill="#1b1b1d"/>
<!-- sunglasses -->
<path d="M115 35.800h21v3.200c0 3-2.500 5-5 5s-4.500-2-5-4.500h-1c-.5 2.500-2.500 4.500-5 4.500s-5-2-5-5z" fill="#241c18"/>
<path d="M117.500 40c1-1 3-1 4 0M129 40c1-1 3-1 4 0" stroke="#5a3a2a" stroke-width="1" fill="none"/>
<!-- hands -->
<path d="M85 144c2.500-.5 6 0 8 1.500l1 8c0 3.500-.8 6-2 7-2-1-4-4-5.500-7.500-1.200-3.500-1.800-6.500-1.500-9z" fill="#c1927a"/>
<path d="M150 144c2.500-1.500 6-1.500 8-.5.800 4 .3 8.500-1.200 12-1 2-2.300 3-3.800 3-1.500-3-3-8-3-14.500z" fill="#c1927a"/>
</g>
</g>
</g>
</svg>
<!-- ===== right dock ===== -->
<div style="left:1206px;top:62px;width:160px;height:704px;background:#535353"></div>
<div style="left:1206px;top:62px;width:160px;height:12px;background:#393939"></div>
<div style="left:1206px;top:62px;width:2px;height:704px;background:#2b2b2b"></div>
<div style="left:1205px;top:530px;width:1px;height:236px;background:#303030"></div>
<div style="left:1245px;top:74px;width:1px;height:692px;background:#3e3e3e"></div>
<div style="left:1246px;top:74px;width:2px;height:692px;background:#2b2b2b"></div>
<svg style="left:1233px;top:64px" width="10" height="8" viewBox="0 0 10 8"><path d="M4.500.5L1 4l3.500 3.500zM9 .5L5.500 4 9 7.500z" fill="#d8d8d8"/></svg>
<svg style="left:1353px;top:64px" width="10" height="8" viewBox="0 0 10 8"><path d="M4.500.5L1 4l3.500 3.500zM9 .5L5.500 4 9 7.500z" fill="#d8d8d8"/></svg>
<!-- icon column -->
<div style="left:1208px;top:74px;width:38px;height:68px;border-top:1px solid #626262;border-bottom:1px solid #3a3a3a"></div>
<div style="left:1208px;top:142px;width:38px;height:1px;background:#2e2e2e"></div><div style="left:1208px;top:143px;width:38px;height:1px;background:#3e3e3e"></div>
<div style="left:1208px;top:144px;width:38px;height:39px;border-top:1px solid #626262"></div>
<div style="left:1208px;top:183px;width:38px;height:1px;background:#2e2e2e"></div><div style="left:1208px;top:184px;width:38px;height:1px;background:#3e3e3e"></div>
<div style="left:1208px;top:185px;width:38px;height:1px;background:#626262"></div>
<div class="grip" style="left:1217px;top:77px;width:20px;height:4px"></div>
<div class="grip" style="left:1217px;top:146px;width:20px;height:4px"></div>
<div style="left:1212px;top:113px;width:29px;height:24px;background:#393939;border-radius:3px;border:1px solid #303030;box-shadow:0 1px 0 #5e5e5e"></div>
<svg style="left:1208px;top:74px" width="38" height="112" viewBox="1208 74 38 112">
<g fill="#cfcfcf"><rect x="1221" y="89" width="5" height="4.500" fill="#444" stroke="#cfcfcf"/><rect x="1221" y="95" width="5" height="4.500" fill="#444" stroke="#cfcfcf"/><rect x="1220.500" y="101" width="6" height="5"/>
<path d="M1229.500 103.500c4.500-1.500 6.500-7 3.800-12" fill="none" stroke="#d4d4d4" stroke-width="1.800"/><path d="M1228.300 91.300l6.500-3.200v5.800z" fill="#d4d4d4"/>
<path d="M1220 118.200v14.300l15.300-7.150z" fill="#e2e2e2"/>
<path d="M1222.800 167.500h8v8.500h-8z" fill="#d8d8d8"/><path d="M1224.800 167c-.3-2.500-3.300-4.500-3.800-7 0-2 1.200-3.500 2.500-3 1.500 1 2.500 3.500 2.600 6zM1226.300 167l-.5-9c.2-2.500 2.700-2.500 3 0l-.5 9zM1229.300 167c0-3 1-5.500 3-6.800 2-.8 3.500.3 3 2-.3 1.200-1.500 1.300-2.500 1.300-1.200 1-1.500 2.200-1.700 3.500z" fill="#d8d8d8"/></g></svg>
<!-- right panel sections -->
<div style="left:1248px;top:74px;width:118px;height:41px;border-top:1px solid #626262"></div>
<div style="left:1248px;top:114px;width:118px;height:1px;background:#2c2c2c"></div><div style="left:1248px;top:115px;width:118px;height:1px;background:#464646"></div>
<div style="left:1248px;top:116px;width:118px;height:67px;border-top:1px solid #626262"></div>
<div style="left:1248px;top:183px;width:118px;height:1px;background:#2c2c2c"></div><div style="left:1248px;top:184px;width:118px;height:1px;background:#464646"></div>
<div style="left:1248px;top:185px;width:118px;height:95px;border-top:1px solid #626262"></div>
<div style="left:1248px;top:279px;width:118px;height:1px;background:#2c2c2c"></div><div style="left:1248px;top:280px;width:118px;height:1px;background:#464646"></div>
<div style="left:1248px;top:281px;width:118px;height:1px;background:#626262"></div>
<div class="grip" style="left:1297px;top:77px;width:20px;height:4px"></div>
<div class="grip" style="left:1297px;top:118px;width:20px;height:4px"></div>
<div class="grip" style="left:1297px;top:187px;width:20px;height:4px"></div>
<div style="left:1252px;top:251px;width:109px;height:24px;background:#393939;border-radius:3px;border:1px solid #303030;box-shadow:0 1px 0 #5e5e5e"></div>
<span class="t" style="left:1285.0px;top:91.5px;font-size:10.5px;color:#ececec;font-weight:700;transform:scaleX(0.9049);">Properties</span>
<span class="t" style="left:1285.0px;top:132.5px;font-size:10.5px;color:#ececec;font-weight:700;transform:scaleX(0.9120);">Adjustments</span>
<span class="t" style="left:1285.0px;top:160.5px;font-size:10.5px;color:#ececec;font-weight:700;transform:scaleX(0.8727);">Styles</span>
<span class="t" style="left:1285.0px;top:200.7px;font-size:10.5px;color:#ececec;font-weight:700;transform:scaleX(0.8674);">Channels</span>
<span class="t" style="left:1285.0px;top:228.7px;font-size:10.5px;color:#ececec;font-weight:700;transform:scaleX(0.8743);">Paths</span>
<span class="t" style="left:1285.0px;top:256.7px;font-size:10.5px;color:#ececec;font-weight:700;transform:scaleX(0.8269);">Layers</span>
<svg style="left:1248px;top:74px" width="118" height="210" viewBox="1248 74 118 210">
<!-- properties icon -->
<g><path d="M1264.800 88.500l-4.600 2v5.600l4.600 2.100 4.600-2.100v-5.600z" fill="#d0d0d0"/><path d="M1260.600 90.800l4.200 1.900 4.200-1.900M1264.800 92.700v5" fill="none" stroke="#6e6e6e" stroke-width=".9"/><rect x="1270.800" y="89" width="4.200" height="3.500" fill="#d8d8d8"/><rect x="1270.800" y="93.800" width="4.200" height="3.800" fill="#d8d8d8"/><rect x="1260.200" y="101.200" width="14.800" height="3.500" fill="#d8d8d8"/><path d="M1271 102.200h3.200l-1.600 2z" fill="#222"/></g>
<!-- adjustments -->
<circle cx="1267" cy="137.500" r="7.500" fill="#d4d4d4" stroke="#d8d8d8" stroke-width="1.400"/><path d="M1261.700 142.800a7.500 7.500 0 0 0 10.600-10.600z" fill="#5c5c5c"/>
<!-- styles -->
<rect x="1261" y="158" width="14" height="13" fill="#d6d6d6"/><rect x="1259" y="165.500" width="9.500" height="10" fill="#535353"/>
<text x="1258.500" y="176.500" font-family="Liberation Sans" font-style="italic" font-size="13" fill="#e4e4e4">fx</text>
<!-- channels -->
<g><circle cx="1267.300" cy="203.500" r="5.400" fill="#e2e2e2"/><circle cx="1263.700" cy="209.500" r="5.400" fill="#d2d2d2"/><circle cx="1271" cy="209.500" r="5.400" fill="#dcdcdc"/><path d="M1267.300 203l3.600 6c-2 1.800-5.200 1.800-7.200 0z" fill="#707070"/><circle cx="1267.300" cy="207.300" r="1.700" fill="#4e4e4e"/></g>
<!-- paths -->
<g fill="none" stroke="#e0e0e0" stroke-width="1.100"><path d="M1261 240c0-8 3-10.500 6.500-10.500s6.500 2.500 6.500 10.500"/><path d="M1258 229.500h19"/><rect x="1259.500" y="239.500" width="3" height="3" fill="#444"/><rect x="1272.500" y="239.500" width="3" height="3" fill="#444"/></g><rect x="1257" y="227.500" width="4" height="4" fill="#e0e0e0"/><rect x="1274" y="227.500" width="4" height="4" fill="#e0e0e0"/><rect x="1266" y="228" width="3" height="3" fill="#e0e0e0"/>
<!-- layers -->
<path d="M1267.500 261.500l8.500 5-8.500 5.300-8.500-5.300z" fill="#b8b8b8"/><path d="M1267.500 254.700l8.500 5.400-8.500 5.400-8.500-5.400z" fill="#f0f0f0"/>
</svg>
<!-- ===== layers panel (floating, mostly hidden behind actions) ===== -->
<div style="left:1023px;top:186px;width:224px;height:437px;background:#484848;border:1px solid #2b2b2b;border-top:none"></div>
<!-- tab bar strip -->
<div style="left:1025px;top:186px;width:221px;height:16px;background:#393939;border-bottom:1px solid #2e2e2e"></div>
<svg style="left:1207px;top:186px" width="39" height="16" viewBox="1207 186 39 16"><path d="M1207 190.500l3.500 3.500-3.500 3.500zM1211.500 190.500l3.500 3.500-3.500 3.500z" fill="#dcdcdc"/><path d="M1221.500 189v11M1223.500 189v11" stroke="#6a6a6a" stroke-width="1"/><path d="M1228 192.500h5l-2.500 3z" fill="#dcdcdc"/><path d="M1234 190.500h8M1234 192.500h8M1234 194.500h8M1234 196.500h8" stroke="#dcdcdc" stroke-width="1"/></svg>
<!-- row 1 (filter row) -->
<div style="left:1025px;top:202px;width:221px;height:30px;background:#535353;border-top:1px solid #606060;border-bottom:1px solid #3a3a3a"></div>
<svg style="left:1207px;top:204px" width="39" height="28" viewBox="1207 204 39 28"><path d="M1210.500 211.500h5l2.500 2.500v7.500h-7.500z" fill="#666" stroke="#9a9a9a"/><rect x="1207" y="216" width="5.500" height="6" fill="#9a9a9a"/><rect x="1232.500" y="208.500" width="8" height="16" fill="#3e3e3e" stroke="#4a4a4a"/><rect x="1233.500" y="209.500" width="6" height="6.500" fill="#777"/></svg>
<!-- row 2 (opacity) -->
<div style="left:1025px;top:232px;width:221px;height:28px;background:#535353;border-top:1px solid #606060;border-bottom:1px solid #3a3a3a"></div>
<div style="left:1190px;top:236px;width:52px;height:18px;border:1px solid #444;border-radius:3px;background:#4a4a4a"></div>
<div style="left:1223px;top:236px;width:19px;height:18px;border:1px solid #444;border-radius:0 3px 3px 0;background:linear-gradient(#686868,#5a5a5a)"></div>
<svg style="left:1229px;top:243px" width="7" height="5" viewBox="0 0 7 5"><path d="M0 .5h7L3.500 4.500z" fill="#c8c8c8"/></svg>
<span class="t" style="left:1201px;top:237px;font-size:12px;color:#828282;line-height:16px">0%</span>
<!-- row 3 (fill) -->
<div style="left:1025px;top:260px;width:221px;height:28px;background:#535353;border-top:1px solid #606060;border-bottom:1px solid #3a3a3a"></div>
<div style="left:1190px;top:264px;width:52px;height:18px;border:1px solid #444;border-radius:3px;background:#4a4a4a"></div>
<div style="left:1223px;top:264px;width:19px;height:18px;border:1px solid #444;border-radius:0 3px 3px 0;background:linear-gradient(#686868,#5a5a5a)"></div>
<svg style="left:1229px;top:271px" width="7" height="5" viewBox="0 0 7 5"><path d="M0 .5h7L3.500 4.500z" fill="#c8c8c8"/></svg>
<span class="t" style="left:1201px;top:265px;font-size:12px;color:#828282;line-height:16px">0%</span>
<!-- layer row -->
<div style="left:1025px;top:289px;width:206px;height:29px;background:#6c7f99"></div>
<svg style="left:1206px;top:295px" width="12" height="15" viewBox="0 0 12 15"><path d="M1.500 7V4.500c0-4 7-4 7 0V6" fill="none" stroke="#f4f4f4" stroke-width="1.500"/><rect x=".5" y="7" width="8" height="6.500" fill="#8a8a9a" stroke="#f4f4f4" stroke-width="1.200"/><rect x="3.500" y="8.500" width="2" height="3.500" fill="#f8f8f8"/></svg>
<!-- layers scroll track -->
<div style="left:1231px;top:289px;width:15px;height:306px;background:linear-gradient(90deg,#3c3c3c,#464646)"></div>
<div style="left:1241px;top:292px;width:1px;height:300px;background:repeating-linear-gradient(180deg,#4e4e4e 0,#4e4e4e 1px,transparent 1px,transparent 3px)"></div>
<!-- bottom toolbar -->
<div style="left:1025px;top:595px;width:221px;height:20px;background:#535353;border-top:1px solid #333;border-bottom:1px solid #333"></div>
<div style="left:1025px;top:596px;width:221px;height:1px;background:#616161"></div>
<div style="left:1025px;top:615px;width:221px;height:7px;background:#505050;border-top:1px solid #5e5e5e"></div>
<div class="grip" style="left:1125px;top:616px;width:20px;height:4px"></div>
<svg style="left:1025px;top:597px" width="221" height="18" viewBox="1025 597 221 18">
<g fill="none" stroke="#b2b2b2" stroke-width="1.800"><path d="M1049 602.200h-2.300a3.300 3.300 0 0 0 0 6.600H1049"/><path d="M1050.700 602.200h2.300a3.300 3.300 0 0 1 0 6.600h-2.300"/><path d="M1046.500 605.500h6.800"/></g>
<text x="1071.500" y="610" font-family="Liberation Sans" font-style="italic" font-size="13.500" fill="#8e8e8e">fx</text>
<path d="M1085 610h3l-1.500 1.600z" fill="#6e6e6e"/>
<rect x="1098" y="600" width="13" height="1" fill="#2e2e2e"/><rect x="1098" y="601" width="13" height="10" fill="#dcdcdc"/><circle cx="1104.400" cy="605.900" r="2.500" fill="#484848"/>
<circle cx="1131" cy="605.100" r="5.100" fill="#d8d8d8" stroke="#d8d8d8" stroke-width="1.200"/><path d="M1127.400 608.700a5.100 5.100 0 0 0 7.200-7.200z" fill="#585858"/><path d="M1138.800 610h3.600l-1.800 2.200z" fill="#e0e0e0"/>
<path d="M1151.500 599.500h4.500l1.500 1.500h7v9.500h-13z" fill="#dcdcdc"/>
<path d="M1179.500 599.500h11v11h-6.500v-4.500h-4.500z" fill="#e2e2e2"/><path d="M1179.500 607.500h3.500v3.500z" fill="#e2e2e2"/>
<g stroke="#8e8e8e" fill="none" stroke-width="1.100"><path d="M1205 602.500h12M1209 602v-1.500h4V602M1206.500 603.500l.8 7.500h7.400l.8-7.500M1209.500 604.500v5.500M1211 604.500v5.500M1212.500 604.500v5.500"/></g>
<g fill="#2a2a2a"><rect x="1243" y="601" width="1" height="1"/><rect x="1241" y="603" width="1" height="1"/><rect x="1243" y="603" width="1" height="1"/><rect x="1239" y="605" width="1" height="1"/><rect x="1241" y="605" width="1" height="1"/><rect x="1243" y="605" width="1" height="1"/><rect x="1237" y="607" width="1" height="1"/><rect x="1239" y="607" width="1" height="1"/><rect x="1241" y="607" width="1" height="1"/><rect x="1243" y="607" width="1" height="1"/><rect x="1235" y="609" width="1" height="1"/><rect x="1237" y="609" width="1" height="1"/><rect x="1239" y="609" width="1" height="1"/><rect x="1241" y="609" width="1" height="1"/><rect x="1243" y="609" width="1" height="1"/></g>
</svg>
<!-- ===== actions panel (floating) ===== -->
<div style="left:999px;top:75px;width:208px;height:456px;background:#484848;border:1px solid #2b2b2b"></div>
<!-- tab bar -->
<div style="left:1000px;top:76px;width:206px;height:18px;background:#393939;border-bottom:1px solid #2c2c2c"></div>
<div style="left:1000px;top:76px;width:49px;height:17px;background:#414141;border-right:1px solid #2e2e2e;border-top:1px solid #4c4c4c"></div>
<div style="left:1050px;top:76px;width:51px;height:18px;background:#535353;border-right:1px solid #2e2e2e;border-top:1px solid #686868"></div>
<span class="t" style="left:1006.5px;top:78.3px;font-size:10.5px;color:#b4b4b4;font-weight:700;transform:scaleX(0.9534);">History</span>
<span class="t" style="left:1057.5px;top:78.3px;font-size:10.5px;color:#f4f4f4;font-weight:700;transform:scaleX(0.8957);">Actions</span>
<svg style="left:1160px;top:76px" width="46" height="17" viewBox="1160 76 46 17"><path d="M1166.500 80.500l4 4-4 4zM1171.500 80.500l4 4-4 4z" fill="#c8c8c8"/><path d="M1181.500 78v13M1183.500 78v13" stroke="#666" stroke-width="1"/><path d="M1188 82.800h5l-2.500 3z" fill="#d4d4d4"/><path d="M1194 81.500h8M1194 83.500h8M1194 85.500h8M1194 87.500h8" stroke="#d4d4d4" stroke-width="1"/></svg>
<!-- rows -->
<div style="left:1000px;top:94px;width:190px;height:62px;background:#535353;border-top:1px solid #606060;border-bottom:1px solid #3a3a3a"></div>
<div style="left:1021px;top:94px;width:1px;height:62px;background:#3c3c3c"></div>
<div style="left:1022px;top:94px;width:1px;height:62px;background:#5c5c5c"></div>
<div style="left:1076px;top:134px;width:114px;height:1px;background:#3c3c3c"></div>
<div style="left:1092px;top:136px;width:98px;height:17px;background:#6c7f99"></div>
<svg style="left:1000px;top:94px" width="190" height="61" viewBox="1000 94 190 61">
<g fill="none" stroke="#e8e8e8" stroke-width="2.100"><path d="M1008.200 105l2.800 3.200 4.800-7.800"/><path d="M1008.200 125l2.800 3.200 4.800-7.800"/><path d="M1008.200 145l2.800 3.200 4.800-7.800"/></g>
<g fill="#4f4f4f" stroke="#3c3c3c" stroke-width="1"><rect x="1026.500" y="99.500" width="12" height="11"/><rect x="1026.500" y="119.500" width="12" height="11"/><rect x="1026.500" y="139.500" width="12" height="11"/></g>
<g stroke="#646464" stroke-width="1" fill="none"><path d="M1027 111.500h12.500v-12M1027 131.500h12.500v-12M1027 151.500h12.500v-12"/></g>
<path d="M1047 102.500h9.500l-4.750 6z" fill="#f0f0f0"/>
<path d="M1063 122.500h9.500l-4.750 6z" fill="#f0f0f0"/>
<path d="M1081 140.500l6.500 4.750-6.500 4.750z" fill="#f0f0f0"/>
<path d="M1062.500 101.500c0-1.500.5-2 2-2h5l1.500 1.500h7.500v2.500h-14c-1 0-1.500 1-1.500 2z" fill="#bdbdbd"/><path d="M1063 110.500l1.200-6.500h16l-1.200 6.500z" fill="#e8e8e8"/>
</svg>
<span class="t" style="left:1088.0px;top:98.4px;font-size:10.5px;color:#f0f0f0;font-weight:400;transform:scaleX(0.8409);">Resize</span>
<span class="t" style="left:1081.0px;top:118.4px;font-size:10.5px;color:#f0f0f0;font-weight:400;transform:scaleX(0.9088);">800px</span>
<span class="t" style="left:1100.0px;top:138.4px;font-size:10.5px;color:#f4f4f4;font-weight:400;transform:scaleX(0.9137);">Image Size</span>
<!-- scroll track -->
<div style="left:1190px;top:94px;width:16px;height:410px;background:linear-gradient(90deg,#3c3c3c,#464646)"></div>
<div style="left:1200px;top:97px;width:1px;height:404px;background:repeating-linear-gradient(180deg,#4e4e4e 0,#4e4e4e 1px,transparent 1px,transparent 3px)"></div>
<!-- bottom toolbar -->
<div style="left:1000px;top:503px;width:206px;height:20px;background:#535353;border-top:1px solid #333;border-bottom:1px solid #333"></div>
<div style="left:1000px;top:504px;width:206px;height:1px;background:#616161"></div>
<div style="left:1039px;top:504px;width:29px;height:18px;background:#3f3f3f;border-left:1px solid #333;border-right:1px solid #333"></div>
<div style="left:1000px;top:523px;width:206px;height:7px;background:#505050;border-top:1px solid #5e5e5e"></div>
<div class="grip" style="left:1093px;top:524px;width:20px;height:4px"></div>
<svg style="left:1000px;top:504px" width="206" height="18" viewBox="1000 504 206 18">
<rect x="1021" y="509.500" width="7.400" height="7.500" fill="#d8d8d8"/>
<circle cx="1053.300" cy="513.300" r="4.900" fill="#e8262a"/>
<path d="M1078 508.500v9.500l9.500-4.750z" fill="#8a8a8a"/>
<path d="M1105 507.500h4.500l1.500 1.500h6.500v9h-12.500z" fill="#dcdcdc"/>
<path d="M1137.500 507.500h11v11h-6.500v-4.500h-4.500z" fill="#e2e2e2"/><path d="M1137.500 515.500h3.500v3.500z" fill="#e2e2e2"/>
<g stroke="#8e8e8e" fill="none" stroke-width="1.100"><path d="M1166 510.500h12M1170 510v-1.500h4v1.500M1167.500 511.500l.8 7.500h7.400l.8-7.500M1170.500 512.500v5.500M1172 512.500v5.500M1173.500 512.500v5.500"/></g>
<g fill="#2a2a2a"><rect x="1203" y="509" width="1" height="1"/><rect x="1201" y="511" width="1" height="1"/><rect x="1203" y="511" width="1" height="1"/><rect x="1199" y="513" width="1" height="1"/><rect x="1201" y="513" width="1" height="1"/><rect x="1203" y="513" width="1" height="1"/><rect x="1197" y="515" width="1" height="1"/><rect x="1199" y="515" width="1" height="1"/><rect x="1201" y="515" width="1" height="1"/><rect x="1203" y="515" width="1" height="1"/><rect x="1195" y="517" width="1" height="1"/><rect x="1197" y="517" width="1" height="1"/><rect x="1199" y="517" width="1" height="1"/><rect x="1201" y="517" width="1" height="1"/><rect x="1203" y="517" width="1" height="1"/></g>
</svg>
<!-- ===== File menu ===== -->
<div style="left:39px;top:22px;width:275px;height:525px;background:#f0f0f0;border:1px solid;border-color:#f6f6f6 #a6a6a6 #a6a6a6 #f6f6f6;box-shadow:3px 3px 4px rgba(0,0,0,.45)"></div>
<span class="t" style="left:58.7px;top:27.7px;font-size:12px;color:#000;font-weight:400;transform:scaleX(0.9862);">New...</span>
<span class="t" style="left:258.8px;top:27.7px;font-size:12px;color:#000;font-weight:400;transform:scaleX(1.0540);">Ctrl+N</span>
<span class="t" style="left:58.7px;top:46.7px;font-size:12px;color:#000;font-weight:400;transform:scaleX(0.9731);">Open...</span>
<span class="t" style="left:258.8px;top:46.7px;font-size:12px;color:#000;font-weight:400;transform:scaleX(1.0338);">Ctrl+O</span>
<span class="t" style="left:58.7px;top:65.7px;font-size:12px;color:#000;font-weight:400;transform:scaleX(0.9661);">Browse in Bridge...</span>
<span class="t" style="left:235.5px;top:65.7px;font-size:12px;color:#000;font-weight:400;transform:scaleX(1.0622);">Alt+Ctrl+O</span>
<span class="t" style="left:58.7px;top:84.7px;font-size:12px;color:#6d6d6d;font-weight:400;transform:scaleX(0.9861);">Browse in Mini Bridge...</span>
<span class="t" style="left:58.7px;top:103.7px;font-size:12px;color:#000;font-weight:400;transform:scaleX(0.9635);">Open As...</span>
<span class="t" style="left:203.5px;top:103.7px;font-size:12px;color:#000;font-weight:400;transform:scaleX(1.0512);">Alt+Shift+Ctrl+O</span>
<span class="t" style="left:58.7px;top:122.7px;font-size:12px;color:#000;font-weight:400;transform:scaleX(0.9657);">Open as Smart Object...</span>
<span class="t" style="left:58.7px;top:142.6px;font-size:12px;color:#000;font-weight:400;transform:scaleX(0.9658);">Open Recent</span>
<svg style="left:299px;top:144px" width="6" height="9" viewBox="0 0 6 9"><path d="M.5.5l4.500 4-4.500 4z" fill="#000"/></svg>
<div style="left:43px;top:161px;width:267px;height:2px;background:linear-gradient(#a0a0a0 50%,#fff 50%)"></div>
<span class="t" style="left:58.7px;top:169.7px;font-size:12px;color:#000;font-weight:400;transform:scaleX(0.9548);">Close</span>
<span class="t" style="left:257.1px;top:169.7px;font-size:12px;color:#000;font-weight:400;transform:scaleX(1.0243);">Ctrl+W</span>
<span class="t" style="left:58.7px;top:188.7px;font-size:12px;color:#000;font-weight:400;transform:scaleX(0.9917);">Close All</span>
<span class="t" style="left:233.8px;top:188.7px;font-size:12px;color:#000;font-weight:400;transform:scaleX(1.0549);">Alt+Ctrl+W</span>
<span class="t" style="left:58.7px;top:207.7px;font-size:12px;color:#000;font-weight:400;transform:scaleX(0.9655);">Close and Go to Bridge...</span>
<span class="t" style="left:224.5px;top:207.7px;font-size:12px;color:#000;font-weight:400;transform:scaleX(1.0365);">Shift+Ctrl+W</span>
<span class="t" style="left:58.7px;top:226.7px;font-size:12px;color:#000;font-weight:400;transform:scaleX(0.8991);">Save</span>
<span class="t" style="left:261.9px;top:226.7px;font-size:12px;color:#000;font-weight:400;transform:scaleX(0.9826);">Ctrl+S</span>
<div style="left:42px;top:243px;width:269px;height:19px;background:#0078d7"></div>
<span class="t" style="left:58.7px;top:245.7px;font-size:12px;color:#fff;font-weight:400;transform:scaleX(0.9087);">Save As...</span>
<span class="t" style="left:229.9px;top:245.7px;font-size:12px;color:#fff;font-weight:400;transform:scaleX(1.0061);">Shift+Ctrl+S</span>
<span class="t" style="left:58.7px;top:264.7px;font-size:12px;color:#6d6d6d;font-weight:400;transform:scaleX(0.9606);">Check In...</span>
<span class="t" style="left:58.7px;top:283.7px;font-size:12px;color:#000;font-weight:400;transform:scaleX(0.9456);">Save for Web...</span>
<span class="t" style="left:206.5px;top:283.7px;font-size:12px;color:#000;font-weight:400;transform:scaleX(1.0324);">Alt+Shift+Ctrl+S</span>
<span class="t" style="left:58.7px;top:302.7px;font-size:12px;color:#000;font-weight:400;transform:scaleX(0.9422);">Revert</span>
<span class="t" style="left:276.8px;top:302.7px;font-size:12px;color:#000;font-weight:400;transform:scaleX(0.8798);">F12</span>
<div style="left:43px;top:322px;width:267px;height:2px;background:linear-gradient(#a0a0a0 50%,#fff 50%)"></div>
<span class="t" style="left:58.7px;top:330.7px;font-size:12px;color:#000;font-weight:400;transform:scaleX(0.9268);">Place...</span>
<div style="left:43px;top:350px;width:267px;height:2px;background:linear-gradient(#a0a0a0 50%,#fff 50%)"></div>
<span class="t" style="left:58.7px;top:359.6px;font-size:12px;color:#000;font-weight:400;transform:scaleX(1.0672);">Import</span>
<svg style="left:299px;top:361px" width="6" height="9" viewBox="0 0 6 9"><path d="M.5.5l4.500 4-4.500 4z" fill="#000"/></svg>
<span class="t" style="left:58.7px;top:378.6px;font-size:12px;color:#000;font-weight:400;transform:scaleX(0.9600);">Export</span>
<svg style="left:299px;top:380px" width="6" height="9" viewBox="0 0 6 9"><path d="M.5.5l4.500 4-4.500 4z" fill="#000"/></svg>
<div style="left:43px;top:397px;width:267px;height:2px;background:linear-gradient(#a0a0a0 50%,#fff 50%)"></div>
<span class="t" style="left:58.7px;top:406.6px;font-size:12px;color:#000;font-weight:400;transform:scaleX(1.0375);">Automate</span>
<svg style="left:299px;top:408px" width="6" height="9" viewBox="0 0 6 9"><path d="M.5.5l4.500 4-4.500 4z" fill="#000"/></svg>
<span class="t" style="left:58.7px;top:425.6px;font-size:12px;color:#000;font-weight:400;transform:scaleX(0.9567);">Scripts</span>
<svg style="left:299px;top:427px" width="6" height="9" viewBox="0 0 6 9"><path d="M.5.5l4.500 4-4.500 4z" fill="#000"/></svg>
<div style="left:43px;top:444px;width:267px;height:2px;background:linear-gradient(#a0a0a0 50%,#fff 50%)"></div>
<span class="t" style="left:58.7px;top:452.7px;font-size:12px;color:#000;font-weight:400;transform:scaleX(0.9680);">File Info...</span>
<span class="t" style="left:209.5px;top:452.7px;font-size:12px;color:#000;font-weight:400;transform:scaleX(1.0549);">Alt+Shift+Ctrl+I</span>
<div style="left:43px;top:472px;width:267px;height:2px;background:linear-gradient(#a0a0a0 50%,#fff 50%)"></div>
<span class="t" style="left:58.7px;top:480.7px;font-size:12px;color:#000;font-weight:400;transform:scaleX(0.9888);">Print...</span>
<span class="t" style="left:260.7px;top:480.7px;font-size:12px;color:#000;font-weight:400;transform:scaleX(1.0182);">Ctrl+P</span>
<span class="t" style="left:58.7px;top:499.7px;font-size:12px;color:#000;font-weight:400;transform:scaleX(0.9885);">Print One Copy</span>
<span class="t" style="left:205.5px;top:499.7px;font-size:12px;color:#000;font-weight:400;transform:scaleX(1.0441);">Alt+Shift+Ctrl+P</span>
<div style="left:43px;top:519px;width:267px;height:2px;background:linear-gradient(#a0a0a0 50%,#fff 50%)"></div>
<span class="t" style="left:58.7px;top:527.7px;font-size:12px;color:#000;font-weight:400;transform:scaleX(0.9093);">Exit</span>
<span class="t" style="left:258.5px;top:527.7px;font-size:12px;color:#000;font-weight:400;transform:scaleX(1.0424);">Ctrl+Q</span>

</div></body></html>
